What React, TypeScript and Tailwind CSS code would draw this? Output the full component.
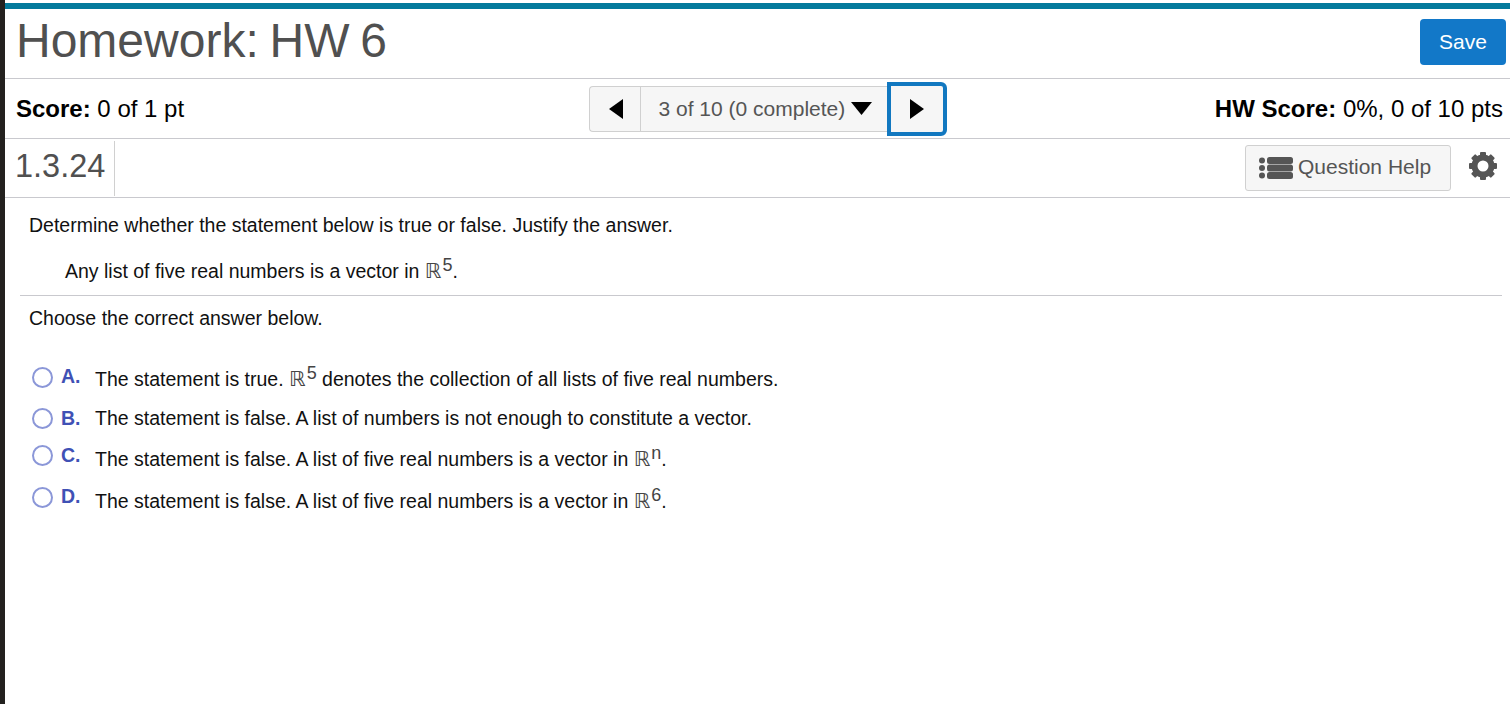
const choices = [
  { key: 'A', rowClass: 'h-[40px]', markClass: 'mb-[4px]', textClass: 'pt-[2px]', text: 'The statement is true. ', sup: '5', rest: ' denotes the collection of all lists of five real numbers.' },
  { key: 'B', rowClass: 'h-[39px]', markClass: 'mb-0', textClass: 'pt-0', text: 'The statement is false. A list of numbers is not enough to constitute a vector.', sup: '', rest: '' },
  { key: 'C', rowClass: 'h-[41px]', markClass: 'mb-[6px]', textClass: 'pt-[2px]', text: 'The statement is false. A list of five real numbers is a vector in ', sup: 'n', rest: '.' },
  { key: 'D', rowClass: 'h-[42px]', markClass: 'mb-[6px]', textClass: 'pt-[4px]', text: 'The statement is false. A list of five real numbers is a vector in ', sup: '6', rest: '.' },
];

function Real({ sup }: { sup: string }) {
  return (
    <span className="text-[#444]">
      <span style={{ fontFamily: '"DejaVu Sans", sans-serif' }} className="text-[21px] leading-none">ℝ</span>
      <sup className="-top-[7px] ml-px align-baseline text-[18px] leading-none">{sup}</sup>
    </span>
  );
}

function ListIcon() {
  return (
    <svg width="34" height="22" viewBox="0 0 34 22" className="shrink-0 text-[#555]" fill="currentColor">
      <circle cx="3" cy="3.5" r="3" />
      <circle cx="3" cy="11" r="3" />
      <circle cx="3" cy="18.5" r="3" />
      <rect x="8" y="0" width="26" height="7" rx="2.5" />
      <rect x="8" y="7.5" width="26" height="7" rx="2.5" />
      <rect x="8" y="15" width="26" height="7" rx="2.5" />
    </svg>
  );
}

function GearIcon() {
  return (
    <svg width="30" height="30" viewBox="0 0 30 30" className="mb-[4px] text-[#555]">
      <circle cx="15" cy="15" r="8.5" fill="none" stroke="currentColor" strokeWidth="6" />
      {[0, 45, 90, 135, 180, 225, 270, 315].map((a) => (
        <rect key={a} x="12" y="1" width="6" height="6" rx="1" fill="currentColor" transform={`rotate(${a} 15 15)`} />
      ))}
    </svg>
  );
}

export default function App() {
  return (
    <div
      className="flex h-[704px] w-[1510px] overflow-hidden bg-white"
      style={{ fontFamily: '"Liberation Sans", Arial, sans-serif' }}
    >
      <div className="w-[5px] shrink-0 bg-[#23211f]" />

      <main className="min-w-0 flex-1 pt-[3px]">
        <div className="h-[6px] bg-[#047a9c]" />

        <header className="flex h-[70px] items-center justify-between border-b border-[#c9c9ce] pl-[11px] pr-[4px]">
          <h1 className="mb-[6px] text-[48px] leading-none font-normal text-[#505050] [word-spacing:-2.5px]">Homework: HW 6</h1>
          <button className="mb-[3px] h-[46px] w-[86px] rounded-[4px] bg-[#1278c8] text-[21px] text-white">Save</button>
        </header>

        <section className="flex h-[60px] items-center justify-between border-b border-[#c9c9ce] pl-[11px] pr-[7px] text-[24px] text-black">
          <div className="w-[416px]">
            <b>Score:</b> 0 of 1 pt
          </div>
          <nav className="flex items-center">
            <div className="flex h-[46px] items-stretch rounded-l-[4px] border border-r-0 border-[#d0d0d0] bg-[#f6f6f6]">
              <button className="flex w-[51px] items-center justify-center border-r border-[#d0d0d0] pl-[2px]">
                <svg width="14" height="20" viewBox="0 0 14 20"><path d="M14 0V20L0 10Z" /></svg>
              </button>
              <button className="flex w-[246px] items-center gap-[6px] pl-[18px] text-[21px] text-[#555]">
                3 of 10 (0 complete)
                <svg width="21" height="13" viewBox="0 0 21 13"><path d="M0 0H21L10.5 13Z" /></svg>
              </button>
            </div>
            <button className="flex h-[54px] w-[60px] items-center justify-center rounded-r-[6px] border-[4px] border-[#1278c0] bg-[#f6f6f6]">
              <svg width="14" height="20" viewBox="0 0 14 20"><path d="M0 0V20L14 10Z" /></svg>
            </button>
          </nav>
          <div className="flex w-[400px] justify-end">
            <span><b>HW Score:</b> 0%, 0 of 10 pts</span>
          </div>
        </section>

        <section className="flex h-[59px] items-center justify-between border-b border-[#c9c9ce] pr-[12px]">
          <div className="flex h-[55px] items-center border-r border-[#d0d0d0] pr-[9px] pl-[10px] text-[32.5px] text-[#505050]">
            <span className="mb-[4px]">1.3.24</span>
          </div>
          <div className="flex items-center gap-[17px]">
            <button className="flex h-[46px] w-[206px] items-center gap-[5px] rounded-[3px] border border-[#d0d0d0] bg-[#f6f6f6] pl-[13px] text-[21px] text-[#555]">
              <ListIcon />
              <span className="mb-[2px]">Question Help</span>
            </button>
            <GearIcon />
          </div>
        </section>

        <div className="pt-[14px] pl-[24px] text-[19.5px] leading-[27px] text-[#111]">
          <p>Determine whether the statement below is true or false. Justify the answer.</p>
          <p className="mt-[19px] pl-[36px]">
            Any list of five real numbers is a vector in <Real sup="5" />.
          </p>
        </div>

        <div className="mt-[10px] ml-[15px] mr-[8px] border-t border-[#c9c9ce] pt-[9px] pl-[9px] text-[19.5px] leading-[27px] text-[#111]">
          Choose the correct answer below.
        </div>

        <div className="mt-[27px] pl-[27px]">
          {choices.map((c) => (
            <div key={c.key} className={`flex items-center ${c.rowClass}`}>
              <div className={`flex items-center ${c.markClass}`}>
                <span className="h-[21px] w-[21px] shrink-0 rounded-full border-2 border-[#8b97d8] bg-white" />
                <span className="w-[42px] shrink-0 pl-[8px] text-[19.5px] font-bold text-[#3f51b5]">{c.key}.</span>
              </div>
              <span className={`text-[19.5px] text-[#111] ${c.textClass}`}>
                {c.text}
                {c.sup && <Real sup={c.sup} />}
                {c.rest}
              </span>
            </div>
          ))}
        </div>
      </main>
    </div>
  );
}
